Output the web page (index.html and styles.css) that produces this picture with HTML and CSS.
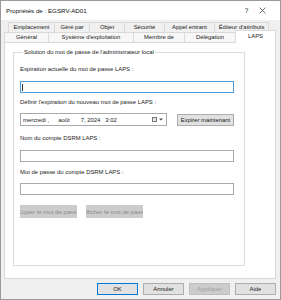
FILE: index.html
```html
<!DOCTYPE html>
<html lang="fr">
<head>
<meta charset="utf-8">
<title>Propriétés de : EGSRV-AD01</title>
<link rel="stylesheet" href="styles.css">
</head>
<body>
<div class="window">
  <div class="titlebar">
    <span class="title">Propriétés de : EGSRV-AD01</span>
    <span class="tb-help">?</span>
    <span class="tb-close">
      <svg width="7" height="7" viewBox="0 0 7 7"><path d="M0.5 0.5 L6.5 6.5 M6.5 0.5 L0.5 6.5" stroke="#333" stroke-width="0.7" fill="none"/></svg>
    </span>
  </div>
  <div class="body">
    <div class="tabs">
      <div class="tabrow row1">
        <div class="tab w-empl">Emplacement</div>
        <div class="tab w-gere">Géré par</div>
        <div class="tab w-obj">Objet</div>
        <div class="tab w-sec">Sécurité</div>
        <div class="tab w-appel">Appel entrant</div>
        <div class="tab w-edit">Éditeur d'attributs</div>
      </div>
      <div class="tabrow row2">
        <div class="tab w-gen">Général</div>
        <div class="tab w-sys">Système d'exploitation</div>
        <div class="tab w-mem">Membre de</div>
        <div class="tab w-del">Délégation</div>
        <div class="tab w-laps selected">LAPS</div>
      </div>
    </div>
    <div class="panel">
      <fieldset class="group">
        <legend>Solution du mot de passe de l'administrateur local</legend>
        <div class="label l1">Expiration actuelle du mot de passe LAPS :</div>
        <div class="textbox focused"><span class="caret"></span></div>
        <div class="label l2">Définir l'expiration du nouveau mot de passe LAPS :</div>
        <div class="daterow">
          <div class="datepicker">
            <span class="d-day">mercredi ,</span>
            <span class="d-month">août</span>
            <span class="d-date">7, 2024</span>
            <span class="d-time">3:02</span>
            <span class="d-cal"></span>
            <svg class="d-arrow" width="4" height="3" viewBox="0 0 4 3"><path d="M0 0.5 L4 0.5 L2 2.5 Z" fill="#444"/></svg>
          </div>
          <div class="btn expire">Expirer maintenant</div>
        </div>
        <div class="label l3">Nom du compte DSRM LAPS :</div>
        <div class="textbox"></div>
        <div class="label l4">Mot de passe du compte DSRM LAPS :</div>
        <div class="textbox"></div>
        <div class="disabled-row">
          <div class="dbtn"><span>Copier le mot de passe</span></div>
          <div class="dbtn"><span>Afficher le mot de passe</span></div>
        </div>
      </fieldset>
    </div>
    <div class="buttons">
      <div class="btn bottom ok">OK</div>
      <div class="btn bottom">Annuler</div>
      <div class="btn bottom disabled">Appliquer</div>
      <div class="btn bottom">Aide</div>
    </div>
  </div>
</div>
</body>
</html>
```

FILE: styles.css
```css
* { box-sizing: border-box; }
html, body { margin: 0; padding: 0; }
body {
  width: 281px;
  height: 300px;
  font-family: "Liberation Sans", Arial, sans-serif;
  font-size: 5.9px;
  color: #1a1a1a;
  background: #fff;
}
.window {
  width: 281px;
  height: 300px;
  border: 1px solid #9a9a9a;
  display: flex;
  flex-direction: column;
  background: #f0f0f0;
}
.titlebar {
  height: 19px;
  background: #fff;
  display: flex;
  align-items: center;
  padding-left: 5px;
  flex: none;
}
.title { font-size: 6.2px; flex: 1; color: #111; }
.tb-help { font-size: 6.5px; width: 25px; text-align: center; color: #222; }
.tb-close { width: 14px; display: flex; justify-content: flex-start; margin-right: 7px; }
.body {
  flex: 1;
  padding: 2px 4px 0 3px;
  display: flex;
  flex-direction: column;
}
.tabs { display: flex; flex-direction: column; flex: none; }
.tabrow { display: flex; height: 10px; align-items: flex-end; }
.row1 { margin-left: 4px; }
.tab {
  height: 10px;
  border: 1px solid #d9d9d9;
  border-bottom: none;
  margin-right: -1px;
  display: flex;
  align-items: center;
  justify-content: center;
  white-space: nowrap;
  background: #f0f0f0;
  color: #1a1a1a;
  line-height: 7px;
}
.row2 .tab { background: #f7f7f7; }
.w-empl { width: 47px; }
.w-gere { width: 36px; }
.w-obj { width: 36px; }
.w-sec { width: 41px; }
.w-appel { width: 51px; }
.w-edit { width: 55px; }
.w-gen { width: 45px; }
.w-sys { width: 86px; }
.w-mem { width: 52px; }
.w-del { width: 52px; }
.w-laps { width: 41px; margin-right: 0; }
.tab.selected {
  height: 13px;
  margin-bottom: -1px;
  background: #fff;
  position: relative;
  z-index: 1;
  align-items: flex-start;
  padding-top: 2px;
}
.panel {
  height: 237px;
  background: #fff;
  border: 1px solid #d9d9d9;
  padding: 6px 30px 0 8px;
  flex: none;
}
.group {
  margin: 0;
  height: 217px;
  border: 1px solid #dcdcdc;
  padding: 0 10px 0 6px;
  min-width: 0;
}
.group legend {
  padding: 0 1px;
  margin-left: 3px;
  line-height: 7px;
}
.label { line-height: 7px; white-space: nowrap; }
.l1 { margin-top: 10px; }
.l2 { margin-top: 6px; }
.l3 { margin-top: 9px; }
.l4 { margin-top: 7px; }
.textbox {
  height: 12px;
  border: 1px solid #a9a9a9;
  background: #fff;
  margin-top: 8px;
  display: flex;
  align-items: center;
  padding-left: 1px;
}
.l4 + .textbox { margin-top: 7px; }
.textbox.focused { border-color: #4d9be0; }
.caret { width: 1px; height: 7px; background: #333; }
.daterow {
  display: flex;
  align-items: flex-start;
  margin-top: 7px;
  gap: 10px;
}
.datepicker {
  width: 147px;
  height: 13px;
  border: 1px solid #a9a9a9;
  background: #fff;
  display: flex;
  align-items: center;
  padding-left: 2px;
  white-space: nowrap;
}
.d-month { margin-left: 9px; }
.d-date { margin-left: 11px; }
.d-time { margin-left: 5px; }
.d-cal {
  width: 5px;
  height: 5px;
  border: 1px solid #777;
  background: #e4e4e4;
  margin-left: auto;
}
.d-arrow { margin: 0 3px 0 2px; }
.btn {
  background: #e1e1e1;
  border: 1px solid #adadad;
  display: flex;
  align-items: center;
  justify-content: center;
  white-space: nowrap;
}
.expire { width: 57px; height: 12px; margin-top: 1px; }
.disabled-row {
  display: flex;
  gap: 9px;
  margin-top: 10px;
}
.dbtn {
  width: 57px;
  height: 13px;
  background: #cccccc;
  display: flex;
  align-items: center;
  justify-content: center;
  overflow: hidden;
  white-space: nowrap;
  color: #8a8a8a;
  font-size: 6.1px;
}
.dbtn span { flex: none; }
.buttons {
  display: flex;
  justify-content: flex-end;
  gap: 5px;
  margin-top: 4px;
}
.btn.bottom { width: 41px; height: 12px; }
.btn.ok { border-color: #0078d7; }
.btn.disabled { background: #cccccc; border-color: #bfbfbf; color: #a0a0a0; }
```
